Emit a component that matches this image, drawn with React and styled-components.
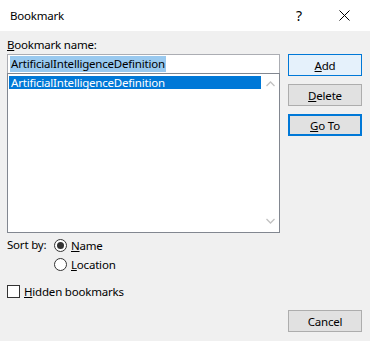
import React, { useState } from 'react';
import styled, { createGlobalStyle } from 'styled-components';

const BOOKMARKS = ["ArtificialIntelligenceDefinition"];

const GlobalStyle = createGlobalStyle`
  html, body, #root {
    margin: 0;
    height: 100%;
  }
  body {
    font-family: "Segoe UI", "Noto Sans", "Open Sans", sans-serif;
    font-size: 11.5px;
    letter-spacing: -0.2px;
    color: #000000;
  }
`;

const Key = ({ children }) => <u>{children}</u>;

const App = () => {
  const [name, setName] = useState(BOOKMARKS[0]);
  const [sortBy, setSortBy] = useState("name");
  const [hidden, setHidden] = useState(false);

  return (
    <Dialog>
      <GlobalStyle />
      <TitleBar>
        <Title>Bookmark</Title>
        <TitleButton>?</TitleButton>
        <TitleButton>
          <svg width="11" height="11" viewBox="0 0 11 11">
            <path d="M0.5 0.5 L10.5 10.5 M10.5 0.5 L0.5 10.5" stroke="#000" strokeWidth="1" />
          </svg>
        </TitleButton>
      </TitleBar>
      <Body>
        <MainRow>
          <LeftColumn>
            <FieldLabel><Key>B</Key>ookmark name:</FieldLabel>
            <NameInput>
              <Selected>{name}</Selected>
            </NameInput>
            <ListBox>
              <ListItems>
                {BOOKMARKS.map((b) => (
                  <ListItem key={b} active={b === name} onClick={() => setName(b)}>{b}</ListItem>
                ))}
              </ListItems>
              <ScrollBar>
                <svg width="9" height="6" viewBox="0 0 9 6">
                  <path d="M0.5 5 L4.5 1 L8.5 5" stroke="#c2c2c2" strokeWidth="1.3" fill="none" />
                </svg>
                <svg width="9" height="6" viewBox="0 0 9 6">
                  <path d="M0.5 1 L4.5 5 L8.5 1" stroke="#c2c2c2" strokeWidth="1.3" fill="none" />
                </svg>
              </ScrollBar>
            </ListBox>
            <SortRow>
              <SortLabel>Sort by:</SortLabel>
              <RadioGroup>
                <OptionRow onClick={() => setSortBy("name")}>
                  <Radio checked={sortBy === "name"} />
                  <span><Key>N</Key>ame</span>
                </OptionRow>
                <OptionRow onClick={() => setSortBy("location")}>
                  <Radio checked={sortBy === "location"} />
                  <span><Key>L</Key>ocation</span>
                </OptionRow>
              </RadioGroup>
            </SortRow>
            <CheckRow onClick={() => setHidden(!hidden)}>
              <CheckBox>{hidden ? "✓" : ""}</CheckBox>
              <span><Key>H</Key>idden bookmarks</span>
            </CheckRow>
          </LeftColumn>
          <ButtonColumn>
            <DialogButton variant="default"><Key>A</Key>dd</DialogButton>
            <DialogButton><Key>D</Key>elete</DialogButton>
            <DialogButton variant="focused"><Key>G</Key>o To</DialogButton>
          </ButtonColumn>
        </MainRow>
        <Footer>
          <DialogButton>Cancel</DialogButton>
        </Footer>
      </Body>
    </Dialog>
  );
};

const Dialog = styled.div`
  display: flex;
  flex-direction: column;
  height: 100vh;
  background: #f0f0f0;
`;

const TitleBar = styled.div`
  display: flex;
  align-items: center;
  height: 31px;
  background: #ffffff;
  flex-shrink: 0;
`;

const Title = styled.div`
  flex: 1;
  padding-left: 10px;
  padding-bottom: 1px;
`;

const TitleButton = styled.div`
  width: 46px;
  height: 31px;
  display: flex;
  align-items: center;
  justify-content: center;
  font-size: 14px;
  &:last-child {
    width: 44px;
    margin-right: 4px;
  }
`;

const Body = styled.div`
  flex: 1;
  display: flex;
  flex-direction: column;
  padding: 7px 8px 9px 7px;
`;

const MainRow = styled.div`
  display: flex;
  gap: 8px;
`;

const LeftColumn = styled.div`
  width: 273px;
  display: flex;
  flex-direction: column;
`;

const FieldLabel = styled.div`
  height: 16px;
  line-height: 14px;
`;

const NameInput = styled.div`
  height: 19px;
  box-sizing: border-box;
  border: 1px solid #abadb3;
  border-bottom: none;
  background: #ffffff;
  padding: 1px 2px;
  display: flex;
  align-items: center;
`;

const Selected = styled.span`
  background: #99c9ef;
  line-height: 16px;
  padding: 0 1px;
`;

const ListBox = styled.div`
  height: 160px;
  box-sizing: border-box;
  border: 1px solid #828790;
  background: #ffffff;
  display: flex;
`;

const ListItems = styled.div`
  flex: 1;
  padding: 2px 1px;
`;

const ListItem = styled.div`
  height: 13px;
  line-height: 13px;
  padding: 0 2px;
  background: ${(p) => (p.active ? "#0078d7" : "transparent")};
  color: ${(p) => (p.active ? "#ffffff" : "#000000")};
`;

const ScrollBar = styled.div`
  width: 17px;
  display: flex;
  flex-direction: column;
  justify-content: space-between;
  align-items: center;
  padding: 7px 0 8px;
`;

const SortRow = styled.div`
  display: flex;
  margin-top: 4px;
`;

const SortLabel = styled.div`
  width: 47px;
  line-height: 16px;
`;

const RadioGroup = styled.div`
  display: flex;
  flex-direction: column;
  gap: 3px;
`;

const OptionRow = styled.div`
  display: flex;
  align-items: center;
  gap: 4px;
  height: 16px;
  cursor: default;
`;

const Radio = styled.span`
  width: 13px;
  height: 13px;
  box-sizing: border-box;
  border: 1px solid #333333;
  border-radius: 50%;
  background: #ffffff;
  position: relative;
  &::after {
    content: "";
    display: ${(p) => (p.checked ? "block" : "none")};
    position: absolute;
    left: 2px;
    top: 2px;
    width: 7px;
    height: 7px;
    border-radius: 50%;
    background: #333333;
  }
`;

const CheckRow = styled.div`
  display: flex;
  align-items: center;
  gap: 4px;
  height: 16px;
  margin-top: 11px;
`;

const CheckBox = styled.span`
  width: 13px;
  height: 13px;
  box-sizing: border-box;
  border: 1px solid #333333;
  background: #ffffff;
  font-size: 10px;
  line-height: 11px;
  text-align: center;
`;

const ButtonColumn = styled.div`
  display: flex;
  flex-direction: column;
  gap: 8px;
  padding-top: 16px;
`;

const DialogButton = styled.button`
  width: 74px;
  height: 22px;
  box-sizing: border-box;
  font-family: inherit;
  font-size: 11.5px;
  letter-spacing: -0.2px;
  color: #000000;
  padding: 0;
  background: ${(p) => (p.variant === "default" ? "#e5f1fb" : "#e1e1e1")};
  border: ${(p) =>
    p.variant === "focused" ? "2px solid #0078d7" : p.variant === "default" ? "1px solid #0078d7" : "1px solid #adadad"};
  outline: none;
`;

const Footer = styled.div`
  margin-top: auto;
  display: flex;
  justify-content: flex-end;
`;

export default App;
